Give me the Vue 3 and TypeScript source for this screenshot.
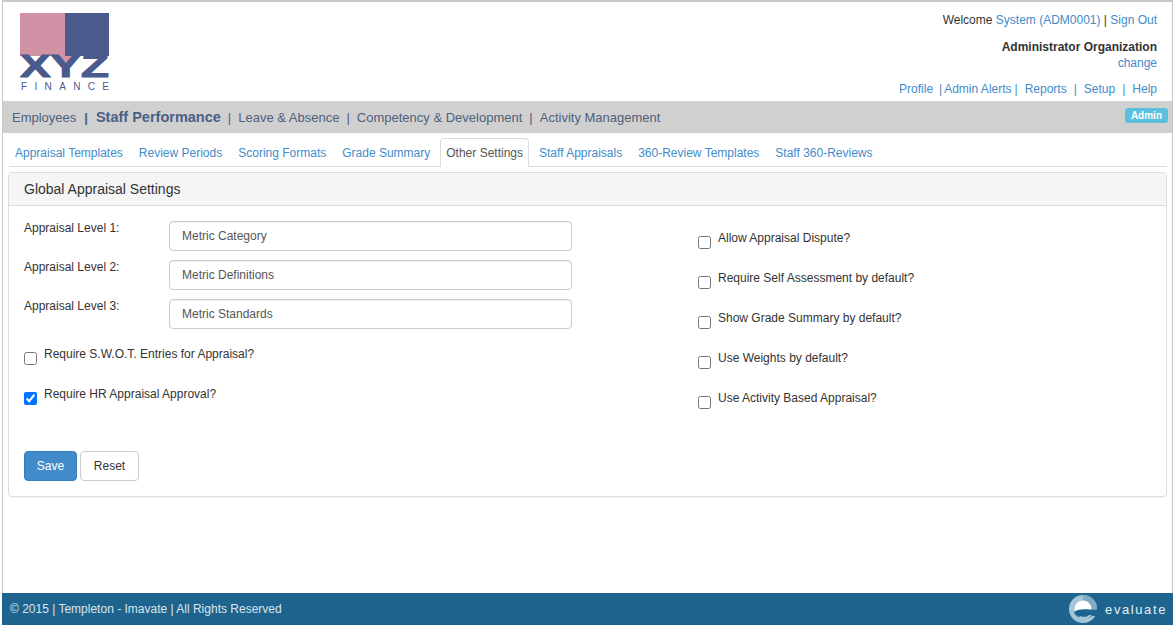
<script setup lang="ts">
const tabs: string[] = ['Appraisal Templates','Review Periods','Scoring Formats','Grade Summary','Other Settings','Staff Appraisals','360-Review Templates','Staff 360-Reviews']
const levels = [['Appraisal Level 1:','Metric Category'],['Appraisal Level 2:','Metric Definitions'],['Appraisal Level 3:','Metric Standards']]
const rightChecks: string[] = ['Allow Appraisal Dispute?','Require Self Assessment by default?','Show Grade Summary by default?','Use Weights by default?','Use Activity Based Appraisal?']
</script>

<template>
  <div class="page">
    <div class="frame">
      <header class="head">
        <svg class="logo" width="92" height="82" viewBox="0 0 92 82">
          <rect x="0" y="0" width="45" height="43" fill="#d292a6"/>
          <rect x="45" y="0" width="44" height="43" fill="#4a5a8c"/>
          <path d="M0 43 L89 43 L89 38 L0 38Z" fill="none"/>
          <path d="M0 43 H14 L16 45 H0Z M0 43" fill="#fff"/>
          <path d="M36 43 L45 50 L45 56 L54 43Z" fill="#d292a6"/>
          <path d="M18 43 L36 43 L46 50 L46 43" fill="none"/>
          <text x="0" y="64" class="xyz" textLength="89" lengthAdjust="spacingAndGlyphs">XYZ</text>
          <text x="1" y="77" class="fin" textLength="88">FINANCE</text>
        </svg>
        <div class="user">
          <div>Welcome <a>System (ADM0001)</a> | <a>Sign Out</a></div>
          <div class="org">Administrator Organization</div>
          <div class="change"><a>change</a></div>
          <div class="links"><a>Profile</a><span class="s1">|</span><a>Admin Alerts</a><span class="s2">|</span><a>Reports</a><span class="s3">|</span><a>Setup</a><span class="s3">|</span><a>Help</a></div>
        </div>
      </header>

      <nav class="mainnav">
        <span>Employees</span><b class="sep">|</b><strong>Staff Performance</strong><i>|</i><span>Leave &amp; Absence</span><i>|</i><span>Competency &amp; Development</span><i>|</i><span>Activity Management</span>
        <em class="badge">Admin</em>
      </nav>

      <div class="tabs">
        <a v-for="t in tabs" :key="t" :class="['tab',{active:t==='Other Settings'}]">{{ t }}</a>
      </div>

      <section class="panel">
        <h3 class="ph">Global Appraisal Settings</h3>
        <div class="pb">
          <div class="cols">
            <div class="left">
              <div v-for="l in levels" :key="l[0]" class="field">
                <label>{{ l[0] }}</label>
                <input class="inp" :value="l[1]" readonly />
              </div>
              <label class="chk first"><input type="checkbox"/><span>Require S.W.O.T. Entries for Appraisal?</span></label>
              <label class="chk"><input type="checkbox" checked/><span>Require HR Appraisal Approval?</span></label>
            </div>
            <div class="right">
              <label v-for="c in rightChecks" :key="c" class="chk"><input type="checkbox"/><span>{{ c }}</span></label>
            </div>
          </div>
          <div class="btns"><button class="save">Save</button><button class="reset">Reset</button></div>
        </div>
      </section>
    </div>
    <footer class="foot">
      <span>© 2015 | Templeton - Imavate | All Rights Reserved</span>
      <div class="brand">
        <svg width="30" height="30" viewBox="0 0 30 30">
          <circle cx="15" cy="15" r="14" fill="#a3c5d8"/>
          <path d="M15 1 A14 14 0 0 1 29 15 L15 15Z" fill="#7fabc4"/>
          <circle cx="15" cy="15" r="8.5" fill="#fff"/>
          <path d="M7 17 H30 V22 H24 A11 11 0 0 1 10 23Z" fill="#1f648e"/>
          <path d="M6 18 C10 15 15 15 22 15.5 L30 15.5 V19 H16 C12 19 10 20 8 22Z" fill="#1f648e"/>
          <path d="M24 21 A13 13 0 0 1 8 26 L12 22 C16 23.5 19 23 21 21Z" fill="#a3c5d8"/>
        </svg>
        <span class="ev">evaluate</span>
      </div>
    </footer>
  </div>
</template>

<style>
html, body { margin: 0; background: #fff; }
</style>

<style scoped>
.page { width: 1175px; height: 628px; box-sizing: border-box; padding-left: 2px; padding-right: 2px; font-family: "Liberation Sans", Arial, sans-serif; font-size: 12px; color: #333; overflow: hidden; }
a { color: #428bca; }
.frame { height: 593px; box-sizing: border-box; border: 1px solid #c8c8c8; border-top: 2px solid #c8c8c8; border-bottom: 0; padding: 0; }
.head { height: 99px; display: flex; justify-content: space-between; }
.logo { margin: 11px 0 0 17px; }
.xyz { font: 900 31px "Liberation Sans", sans-serif; fill: #4a5a8c; stroke: #4a5a8c; stroke-width: 1px; }
.fin { font: 10px "Liberation Sans", sans-serif; fill: #4a5a8c; }
.user { text-align: right; padding: 11px 15px 0 0; line-height: 15px; }
.org { font-weight: 700; margin-top: 12px; }
.change { margin-top: 1px; }
.links { margin-top: 11px; }
.s1 { margin: 0 2px 0 6px; color: #428bca; }
.s2 { margin: 0 7px 0 3px; color: #428bca; }
.s3 { margin: 0 7px; color: #428bca; }
.mainnav { height: 32px; background: #d0d0d0; display: flex; align-items: center; padding-left: 9px; position: relative; font-size: 13px; color: #4f617c; }
.mainnav span { letter-spacing: 0; }
.mainnav i { font-style: normal; margin: 0 7px; font-size: 13px; }
.sep { margin: 0 8px; font-weight: 700; color: #4a5a8c; }
.mainnav strong { font-size: 14.5px; font-weight: 700; color: #4a5f85; }
.badge { position: absolute; right: 4px; top: 7px; background: #5bc0de; color: #fff; font: 700 10px/15px "Liberation Sans", sans-serif; padding: 0 6px; border-radius: 3px; }
.tabs { display: flex; margin: 5px 5px 0 6px; border-bottom: 1px solid #ddd; height: 28px; padding-left: 0; }
.tab { height: 28px; padding: 0 5px; margin-right: 4px; line-height: 29px; border: 1px solid transparent; border-bottom: 0; border-radius: 4px 4px 0 0; white-space: nowrap; box-sizing: content-box; }
.tab.active { color: #555; background: #fff; border-color: #ddd; position: relative; height: 28px; }
.panel { margin: 5px 5px 0 5px; border: 1px solid #ddd; border-radius: 4px; box-shadow: 0 1px 1px rgba(0,0,0,.05); height: 325px; box-sizing: border-box; }
.ph { margin: 0; height: 33px; box-sizing: border-box; background: #f5f5f5; border-bottom: 1px solid #ddd; padding-left: 15px; font: 400 14px/32px "Liberation Sans", sans-serif; color: #333; border-radius: 3px 3px 0 0; }
.pb { padding: 15px 15px 0; }
.cols { display: flex; height: 230px; }
.left { width: 674px; flex: none; }
.right { padding-top: 10px; }
.field { display: flex; height: 30px; margin-bottom: 9px; }
.field label { width: 145px; flex: none; padding-top: 0; line-height: 15px; }
.inp { width: 403px; height: 30px; box-sizing: border-box; border: 1px solid #ccc; border-radius: 4px; padding: 0 12px; font: 12px "Liberation Sans", sans-serif; color: #555; box-shadow: inset 0 1px 1px rgba(0,0,0,.075); outline: none; }
.chk { display: flex; align-items: flex-start; height: 40px; line-height: 15px; }
.chk.first { margin-top: 18px; }
.chk input { width: 13px; height: 13px; margin: 5px 7px 0 0; flex: none; }
.btns { display: flex; gap: 3px; margin-top: 0; }
.btns button { height: 30px; border-radius: 4px; font: 12px "Liberation Sans", sans-serif; padding: 0; }
.save { width: 53px; background: #428bca; border: 1px solid #357ebd; color: #fff; }
.reset { width: 59px; background: #fff; border: 1px solid #ccc; color: #333; }
.foot { height: 32px; background: #1f648e; color: #d9e4ec; display: flex; align-items: center; justify-content: space-between; padding: 0 6px 0 8px; }
.brand { display: flex; align-items: center; gap: 7px; margin-top: 0; }
.ev { font: 13px "Liberation Sans", sans-serif; letter-spacing: 1.6px; color: #e6eef3; }
</style>
